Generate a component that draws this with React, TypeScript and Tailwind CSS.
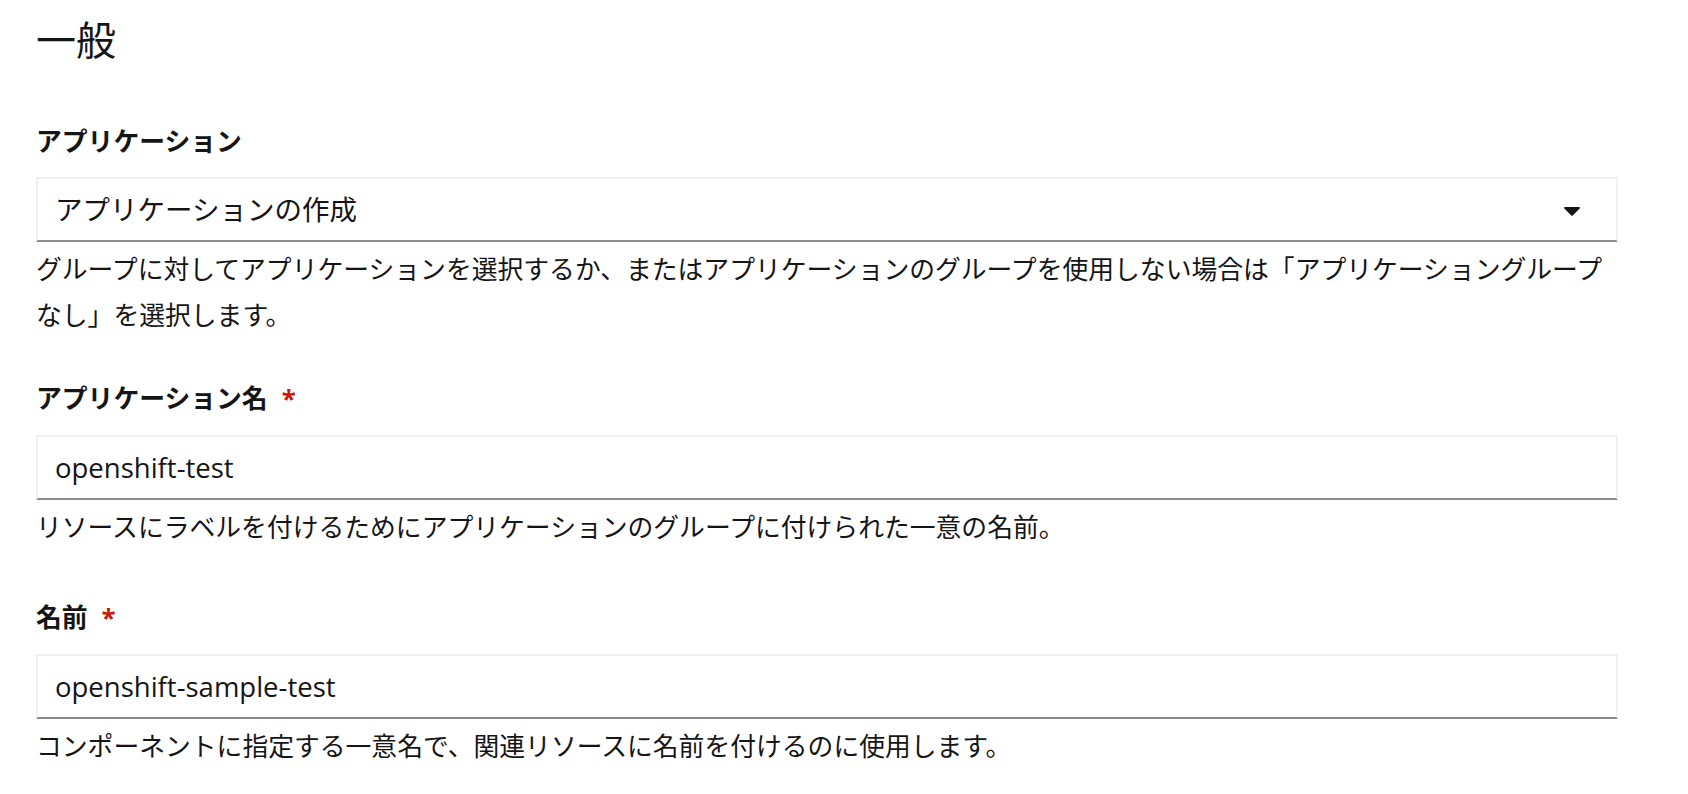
import { ReactNode } from "react";

function Required() {
  return (
    <span className="ml-[14px] font-bold text-[#c9190b]" aria-hidden="true">
      *
    </span>
  );
}

function FieldLabel({
  children,
  required = false,
  className = "",
}: {
  children: ReactNode;
  required?: boolean;
  className?: string;
}) {
  return (
    <label
      className={`block text-[25.8px] leading-[36px] font-bold ${className}`}
    >
      {children}
      {required && <Required />}
    </label>
  );
}

function HelperText({ children }: { children: ReactNode }) {
  return <p className="mt-1 text-[25.8px] leading-[46px]">{children}</p>;
}

function TextField({ value }: { value: string }) {
  return (
    <input
      type="text"
      defaultValue={value}
      className="mt-[19px] block h-[65px] w-full border-2 border-[#f0f0f0] border-b-[#8a8d90] bg-white pl-[17px] text-[27.5px] text-[#151515] outline-none"
    />
  );
}

export default function App() {
  return (
    <div className="min-h-screen bg-white pt-4 pl-[36px] font-['Open_Sans','Noto_Sans_CJK_JP',sans-serif] text-[#151515]">
      <h1 className="h-12 text-[40px] leading-[48px] font-normal">一般</h1>

      <div className="w-[1582px]">
        <FieldLabel className="mt-[59px]">アプリケーション</FieldLabel>
        <button
          type="button"
          className="mt-[18px] flex h-[65px] w-full items-center justify-between border-2 border-[#f0f0f0] border-b-[#8a8d90] bg-white pr-[36px] pl-[17px] text-left text-[27.5px]"
        >
          <span>アプリケーションの作成</span>
          <svg
            viewBox="0 0 16 9"
            className="mt-[3px] h-[9px] w-4 fill-[#151515]"
            aria-hidden="true"
          >
            <path d="M0.9 0H15.1C15.9 0 16.3 0.9 15.7 1.5L8.7 8.6C8.3 9 7.7 9 7.3 8.6L0.3 1.5C-0.3 0.9 0.1 0 0.9 0Z" />
          </svg>
        </button>
        <HelperText>
          グループに対してアプリケーションを選択するか、またはアプリケーションのグループを使用しない場合は「アプリケーショングループなし」を選択します。
        </HelperText>

        <FieldLabel required className="mt-[42px]">
          アプリケーション名
        </FieldLabel>
        <TextField value="openshift-test" />
        <HelperText>
          リソースにラベルを付けるためにアプリケーションのグループに付けられた一意の名前。
        </HelperText>

        <FieldLabel required className="mt-[49px]">
          名前
        </FieldLabel>
        <TextField value="openshift-sample-test" />
        <HelperText>
          コンポーネントに指定する一意名で、関連リソースに名前を付けるのに使用します。
        </HelperText>
      </div>
    </div>
  );
}
